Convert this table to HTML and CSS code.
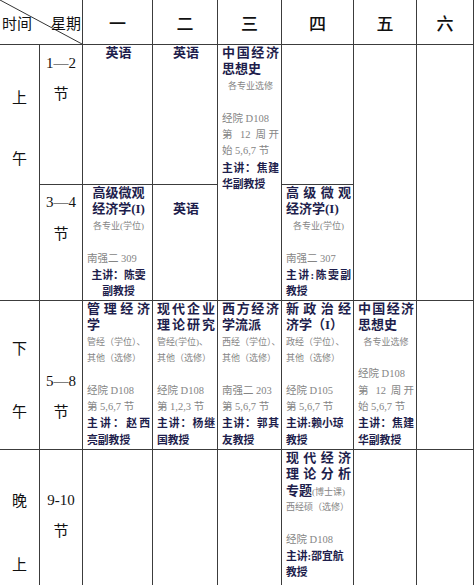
FILE: index.html
```html
<!DOCTYPE html>
<html lang="zh-CN">
<head>
<meta charset="utf-8">
<title>课程表</title>
<link rel="stylesheet" href="styles.css">
</head>
<body>
<table class="tt">
  <colgroup>
    <col class="w0"><col class="w1"><col class="w2"><col class="w3"><col class="w4"><col class="w5"><col class="w6"><col class="w7">
  </colgroup>
  <tr class="rh">
    <th colspan="2" class="corner">
      <svg class="diag" preserveAspectRatio="none" viewBox="0 0 100 100"><line x1="0" y1="0" x2="100" y2="100" vector-effect="non-scaling-stroke"/></svg>
      <div class="corner-in"><span>时间</span><span>星期</span></div>
    </th>
    <th class="day">一</th>
    <th class="day">二</th>
    <th class="day">三</th>
    <th class="day">四</th>
    <th class="day">五</th>
    <th class="day">六</th>
  </tr>
  <tr class="ra">
    <td rowspan="2" class="lab"><div class="lab-in p43"><div>上</div><div class="g41">午</div></div></td>
    <td class="lab"><div class="lab-in p8"><div class="num">1—2</div><div class="g11">节</div></div></td>
    <td class="k"><div class="b c">英语</div></td>
    <td class="k"><div class="b c">英语</div></td>
    <td rowspan="2" class="k">
      <div class="b j">中国经济</div>
      <div class="b">思想史</div>
      <div class="g s c">各专业选修</div>
      <div class="sp"></div>
      <div class="g">经院 D108</div>
      <div class="g j">第 12 周开</div>
      <div class="g">始 5,6,7 节</div>
      <div class="t j">主讲：焦建</div>
      <div class="t">华副教授</div>
    </td>
    <td class="k"></td>
    <td rowspan="2" class="k"></td>
    <td rowspan="2" class="k"></td>
  </tr>
  <tr class="rb">
    <td class="lab"><div class="lab-in p7"><div class="num">3—4</div><div class="g12">节</div></div></td>
    <td class="k">
      <div class="b c">高级微观</div>
      <div class="b c">经济学(I)</div>
      <div class="g s c">各专业(学位)</div>
      <div class="sp"></div>
      <div class="g">南强二 309</div>
      <div class="t c">主讲：陈雯</div>
      <div class="t c">副教授</div>
    </td>
    <td class="k">
      <div class="sp"></div>
      <div class="b c">英语</div>
    </td>
    <td class="k">
      <div class="b j">高级微观</div>
      <div class="b">经济学(I)</div>
      <div class="g s c">各专业(学位)</div>
      <div class="sp"></div>
      <div class="g">南强二 307</div>
      <div class="t j">主讲:陈雯副</div>
      <div class="t">教授</div>
    </td>
  </tr>
  <tr class="rc">
    <td class="lab"><div class="lab-in p38"><div>下</div><div class="g43">午</div></div></td>
    <td class="lab"><div class="lab-in p70"><div class="num">5—8</div><div class="g11">节</div></div></td>
    <td class="k">
      <div class="b j">管理经济</div>
      <div class="b">学</div>
      <div class="g s">管经（学位）、</div>
      <div class="g s">其他（选修）</div>
      <div class="sp"></div>
      <div class="g">经院 D108</div>
      <div class="g">第 5,6,7 节</div>
      <div class="t j">主讲：赵西</div>
      <div class="t">亮副教授</div>
    </td>
    <td class="k">
      <div class="b j">现代企业</div>
      <div class="b j">理论研究</div>
      <div class="g s">管经(学位)、</div>
      <div class="g s">其他（选修）</div>
      <div class="sp"></div>
      <div class="g">经院 D108</div>
      <div class="g">第 1,2,3 节</div>
      <div class="t j">主讲：杨继</div>
      <div class="t">国教授</div>
    </td>
    <td class="k">
      <div class="b j">西方经济</div>
      <div class="b">学流派</div>
      <div class="g s">西经（学位）、</div>
      <div class="g s">其他（选修）</div>
      <div class="sp"></div>
      <div class="g">南强二 203</div>
      <div class="g">第 5,6,7 节</div>
      <div class="t j">主讲：郭其</div>
      <div class="t">友教授</div>
    </td>
    <td class="k">
      <div class="b j">新政治经</div>
      <div class="b">济学（I）</div>
      <div class="g s">政经（学位）、</div>
      <div class="g s">其他（选修）</div>
      <div class="sp"></div>
      <div class="g">经院 D105</div>
      <div class="g">第 5,6,7 节</div>
      <div class="t">主讲:赖小琼</div>
      <div class="t">教授</div>
    </td>
    <td class="k">
      <div class="b j">中国经济</div>
      <div class="b">思想史</div>
      <div class="g s c">各专业选修</div>
      <div class="sp"></div>
      <div class="g">经院 D108</div>
      <div class="g j">第 12 周开</div>
      <div class="g">始 5,6,7 节</div>
      <div class="t j">主讲：焦建</div>
      <div class="t">华副教授</div>
    </td>
    <td class="k"></td>
  </tr>
  <tr class="rd">
    <td class="lab"><div class="lab-in p41"><div>晚</div><div class="g44">上</div></div></td>
    <td class="lab"><div class="lab-in p40"><div class="num">9-10</div><div class="g11">节</div></div></td>
    <td class="k"></td>
    <td class="k"></td>
    <td class="k"></td>
    <td class="k">
      <div class="b j">现代经济</div>
      <div class="b j">理论分析</div>
      <div class="b">专题<span class="g s">(博士课)</span></div>
      <div class="g s">西经硕（选修）</div>
      <div class="sp"></div>
      <div class="g">经院 D108</div>
      <div class="t">主讲:邵宜航</div>
      <div class="t">教授</div>
    </td>
    <td class="k"></td>
    <td class="k"></td>
  </tr>
</table>
</body>
</html>
```

FILE: styles.css
```css
html, body {
  margin: 0;
  padding: 0;
  background: #ffffff;
}
body {
  width: 474px;
  height: 585px;
  overflow: hidden;
  font-family: "Liberation Serif", "Noto Sans CJK SC", serif;
  color: #111;
}
.tt {
  border-collapse: collapse;
  table-layout: fixed;
  width: 475px;
  margin: -1px 0 0 -1px;
}
.tt th, .tt td {
  border: 1px solid #3c3c3c;
  padding: 0;
  vertical-align: top;
}
.tt tr:last-child td {
  border-bottom: 2px solid #555;
}
.w0 { width: 40px; }
.w1 { width: 43px; }
.w2 { width: 70px; }
.w3 { width: 65px; }
.w4 { width: 64px; }
.w5 { width: 72px; }
.w6 { width: 63px; }
.w7 { width: 57px; }

.rh { height: 45px; }
.ra { height: 140px; }
.rb { height: 114px; }
.rc { height: 149px; }
.rd { height: 137px; }

.tt .corner {
  position: relative;
  font-weight: normal;
  vertical-align: middle;
}
.diag {
  position: absolute;
  left: 0;
  top: 0;
  width: 100%;
  height: 100%;
}
.diag line {
  stroke: #333;
  stroke-width: 1;
}
.corner-in {
  display: flex;
  justify-content: space-between;
  align-items: center;
  padding: 1px 1px 0 2px;
  font-family: "Noto Sans CJK SC", sans-serif;
  font-size: 15px;
  line-height: 20px;
  position: relative;
}
.tt .day {
  vertical-align: middle;
  text-align: center;
  font-family: "Noto Sans CJK SC", sans-serif;
  font-size: 17px;
  font-weight: 500;
  line-height: 20px;
  padding-top: 1px;
}

.lab {
  text-align: center;
}
.lab-in {
  display: flex;
  flex-direction: column;
  align-items: center;
  font-size: 15px;
  line-height: 20px;
  font-family: "Liberation Serif", "Noto Sans CJK SC", serif;
}
.num { font-size: 15px; }
.p7 { padding-top: 7px; }
.p8 { padding-top: 8px; }
.p38 { padding-top: 38px; }
.p40 { padding-top: 40px; }
.p41 { padding-top: 41px; }
.p43 { padding-top: 43px; }
.p70 { padding-top: 70px; }
.g11 { margin-top: 11px; }
.g12 { margin-top: 12px; }
.g41 { margin-top: 41px; }
.g43 { margin-top: 43px; }
.g44 { margin-top: 44px; }

.tt .k {
  padding: 0 2px 0 4px;
}
.k > div {
  line-height: 16.4px;
  height: 16.4px;
  white-space: nowrap;
}
.b {
  font-size: 13px;
  font-weight: 700;
  color: #1e1e4c;
}
.t {
  font-size: 10.8px;
  font-weight: 700;
  color: #1e1e4c;
}
.g {
  font-size: 10.5px;
  color: #858585;
  font-weight: normal;
}
.s {
  font-size: 9px;
}
.c { text-align: center; }
.j {
  text-align: justify;
  text-align-last: justify;
}
.k > .j {
  white-space: normal;
}
.sp { height: 16.4px; }
```
